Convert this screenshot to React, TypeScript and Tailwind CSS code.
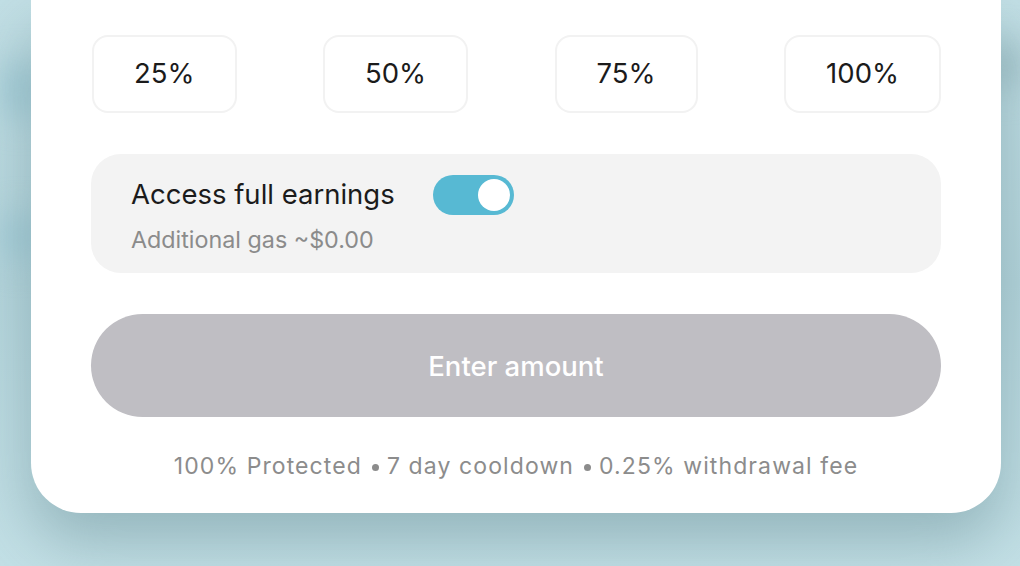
import { useState } from "react";

const font = { fontFamily: "Inter, 'Noto Sans', sans-serif" };

const presets = ["25%", "50%", "75%", "100%"];
const notes = ["100% Protected", "7 day cooldown", "0.25% withdrawal fee"];

export default function App() {
  const [on, setOn] = useState(true);

  return (
    <div
      className="relative h-[566px] w-[1020px] overflow-hidden bg-[linear-gradient(180deg,#c2dfe5_0%,#b5d5dc_50%,#c3e0e6_100%)]"
      style={font}
    >
      <div className="absolute left-0 top-[60px] h-[60px] w-[40px] rounded-full bg-[#a2cbd6] blur-lg" />
      <div className="absolute left-0 top-[212px] h-[50px] w-[40px] rounded-full bg-[#a2cbd6] blur-lg" />
      <div className="absolute right-0 top-[40px] h-[50px] w-[30px] rounded-full bg-[#9fbfc6] blur-lg" />

      <div className="relative ml-[31px] mr-[19px] flex h-[513px] flex-col rounded-b-[50px] bg-white pl-[60px] pr-[60px] pt-[35px] shadow-[0_30px_60px_rgba(70,110,118,0.35)]">
        <div className="flex justify-between pl-[1px]">
          {presets.map((p) => (
            <button
              key={p}
              className="flex h-[78px] items-center rounded-[16px] border-2 border-[#f2f2f2] bg-white px-10 text-[27.5px] text-[#1b1b1b]"
            >
              {p}
            </button>
          ))}
        </div>

        <div className="mt-[41px] flex h-[119px] flex-col rounded-[30px] bg-[#f3f3f3] pl-[40px] pr-10 pt-[20px]">
          <div className="flex items-center gap-[38px]">
            <span className="text-[27.5px] text-[#1b1b1b]">Access full earnings</span>
            <button
              onClick={() => setOn(!on)}
              className={`flex h-[40px] w-[81px] items-center rounded-full px-[4px] ${
                on ? "justify-end bg-[#57b9d3]" : "justify-start bg-[#d0d0d0]"
              }`}
            >
              <span className="h-[32px] w-[32px] rounded-full bg-white" />
            </button>
          </div>
          <span className="mt-[8px] text-[23.3px] text-[#8b8b8b]">Additional gas ~$0.00</span>
        </div>

        <button className="mt-[41px] flex h-[103px] items-center justify-center rounded-full bg-[#bfbec3] pt-[2px] text-[27.5px] font-medium text-white">
          Enter amount
        </button>

        <p className="mt-[32px] flex items-center justify-center text-[23px] tracking-[1.1px] text-[#8c8c8c]">
          {notes.map((n, i) => (
            <span key={n} className="flex items-center">
              {i > 0 && <span className="ml-[10px] mr-[8px] mt-[2px] h-[7px] w-[7px] shrink-0 rounded-full bg-[#8c8c8c]" />}
              {n}
            </span>
          ))}
        </p>
      </div>
    </div>
  );
}
